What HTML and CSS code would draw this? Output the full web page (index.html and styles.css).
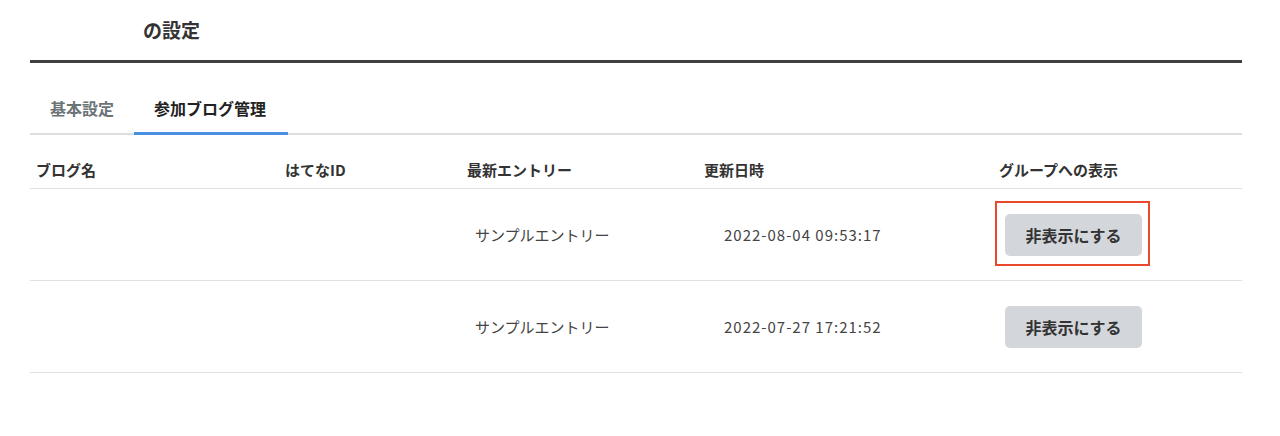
FILE: index.html
```html
<!DOCTYPE html>
<html lang="ja">
<head>
  <meta charset="UTF-8">
  <meta name="viewport" content="width=device-width, initial-scale=1.0">
  <title>の設定</title>
  <link rel="stylesheet" href="styles.css">
</head>
<body>
  <div class="page">
    <!-- Page title -->
    <div class="page-header">
      <h1>の設定</h1>
    </div>

    <!-- Tabs -->
    <nav class="tabs">
      <a class="tab" href="#">基本設定</a>
      <a class="tab active" href="#">参加ブログ管理</a>
    </nav>

    <!-- Blog list -->
    <div class="blog-table">
      <div class="row head">
        <div class="cell">ブログ名</div>
        <div class="cell">はてなID</div>
        <div class="cell">最新エントリー</div>
        <div class="cell">更新日時</div>
        <div class="cell">グループへの表示</div>
      </div>

      <div class="row">
        <div class="cell"></div>
        <div class="cell"></div>
        <div class="cell entry">サンプルエントリー</div>
        <div class="cell date">2022-08-04 09:53:17</div>
        <div class="cell action">
          <span class="highlight">
            <button class="hide-button">非表示にする</button>
          </span>
        </div>
      </div>

      <div class="row">
        <div class="cell"></div>
        <div class="cell"></div>
        <div class="cell entry">サンプルエントリー</div>
        <div class="cell date">2022-07-27 17:21:52</div>
        <div class="cell action">
          <button class="hide-button">非表示にする</button>
        </div>
      </div>
    </div>
  </div>
</body>
</html>
```

FILE: styles.css
```css
body {
  font-family: "Noto Sans CJK JP", "Liberation Sans", sans-serif;
  margin: 0;
  padding: 0;
  background-color: #fff;
  color: #333;
}

.page {
  margin: 0 38px 0 30px;
}

.page-header {
  height: 60px;
  border-bottom: 3px solid #3f4042;
  display: flex;
  align-items: center;
  padding-left: 113px;
}

.page-header h1 {
  font-size: 19px;
  font-weight: bold;
  margin: 0;
  line-height: 24px;
  color: #333;
}

.tabs {
  display: flex;
  border-bottom: 2px solid #dcdee1;
}

.tab {
  display: block;
  padding: 34px 20px 13px;
  font-size: 16px;
  line-height: 22px;
  font-weight: bold;
  color: #6b7377;
  text-decoration: none;
  border-bottom: 3px solid transparent;
  margin-bottom: -2px;
}

.tab.active {
  padding-right: 22px;
  color: #222;
  border-bottom-color: #4a90e2;
}

.row {
  display: grid;
  grid-template-columns: 249px 182px 237px 295px 1fr;
  align-items: center;
  height: 91px;
  border-bottom: 1px solid #dfe0e3;
}

.row.head {
  height: 53px;
  align-items: end;
}

.head .cell {
  font-size: 15px;
  font-weight: bold;
  line-height: 20px;
  padding: 0 0 8px 6px;
  color: #333;
}

.cell {
  font-size: 15px;
  color: #444;
}

.entry {
  padding-left: 14px;
}

.date {
  padding-left: 26px;
  letter-spacing: 1px;
}

.action {
  padding-left: 12px;
}

.highlight {
  position: relative;
  display: inline-block;
}

/* red annotation box round the first button */
.highlight::after {
  content: "";
  position: absolute;
  top: -13px;
  left: -10px;
  right: -8px;
  bottom: -10px;
  border: 2px solid #e8492b;
}

.hide-button {
  display: block;
  width: 137px;
  height: 42px;
  font-family: inherit;
  font-size: 16px;
  font-weight: bold;
  color: #333;
  background-color: #d3d6da;
  border: none;
  border-radius: 5px;
  cursor: pointer;
}
```
